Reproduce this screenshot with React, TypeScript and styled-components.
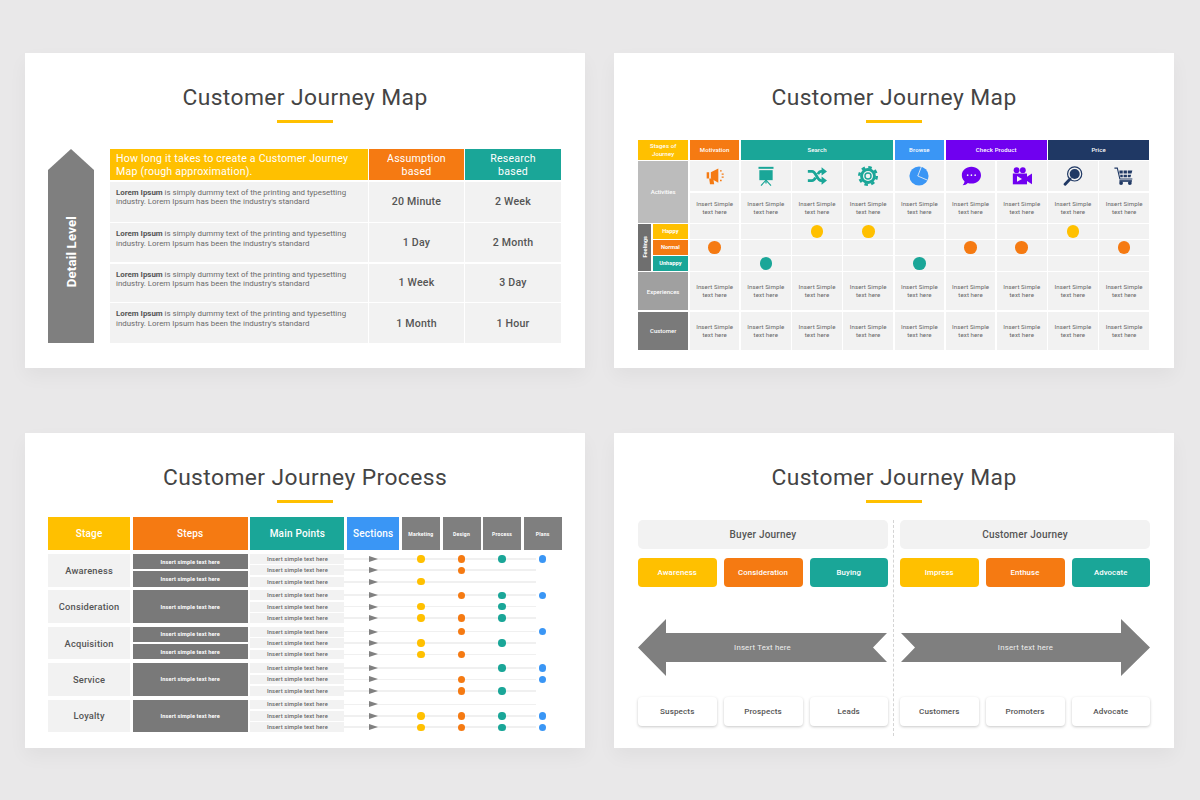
import React from "react";
import styled, { createGlobalStyle } from "styled-components";

const YELLOW = "#ffc000";
const ORANGE = "#f57a12";
const TEAL = "#1aa698";
const BLUE = "#3a96f5";
const PURPLE = "#7000f0";
const NAVY = "#1f3864";
const CELL = "#f2f2f2";
const GREY = "#7f7f7f";

const Global = createGlobalStyle`
  html, body { margin: 0; padding: 0; background: #e9e8e9; }
  body { font-family: Roboto, "Liberation Sans", sans-serif; }
  #root { width: 1200px; height: 800px; overflow: hidden; }
`;

const Page = styled.div`
  width: 1200px;
  height: 800px;
  box-sizing: border-box;
  padding: 53px 26px 0 25px;
  display: grid;
  grid-template-columns: 560px 560px;
  grid-template-rows: 315px 315px;
  column-gap: 29px;
  row-gap: 65px;
  background: #e9e8e9;
`;

const Slide = styled.section`
  background: #fff;
  box-shadow: 0 8px 18px rgba(0, 0, 0, 0.045);
  display: flex;
  flex-direction: column;
  align-items: center;
  box-sizing: border-box;
  padding-top: 30px;
`;

const Title = styled.h2`
  margin: 0;
  font-size: 22.8px;
  line-height: 30px;
  font-weight: 400;
  letter-spacing: 0.42px;
  color: #444;
`;

const Rule = styled.div`
  width: 56px;
  height: 3px;
  margin-top: 7px;
  background: ${YELLOW};
  flex: none;
`;

/* ---------- slide 1 ---------- */
const DetailBody = styled.div`
  margin-top: 26px;
  width: 100%;
  box-sizing: border-box;
  padding: 0 24px 0 23px;
  display: flex;
  gap: 16px;
`;

const UpArrow = styled.div`
  width: 46px;
  height: 194px;
  flex: none;
  background: #7f7f7f;
  clip-path: polygon(50% 0, 100% 21px, 100% 100%, 0 100%, 0 21px);
  display: flex;
  align-items: center;
  justify-content: center;
  padding-top: 12px;
  box-sizing: border-box;
`;

const UpArrowLabel = styled.span`
  writing-mode: vertical-rl;
  transform: rotate(180deg);
  color: #fff;
  font-size: 13.2px;
  font-weight: 700;
  letter-spacing: 0.2px;
`;

const DetailTable = styled.div`
  flex: 1;
  display: grid;
  grid-template-columns: 258px 95px 96px;
  grid-template-rows: 31px 40px 39px 38px 40px;
  gap: 1.5px 1px;
`;

const DetailHead = styled.div<{ $bg: string; $left?: boolean }>`
  background: ${(p) => p.$bg};
  color: #fff;
  font-size: 10.6px;
  line-height: 13px;
  letter-spacing: 0.2px;
  display: flex;
  align-items: center;
  justify-content: ${(p) => (p.$left ? "flex-start" : "center")};
  text-align: ${(p) => (p.$left ? "left" : "center")};
  padding: ${(p) => (p.$left ? "0 4px 0 6px" : "0 16px")};
  box-sizing: border-box;
`;

const LoremCell = styled.div`
  background: ${CELL};
  padding: 6px 6px 0;
  font-size: 7.9px;
  line-height: 9.6px;
  color: #6b6b6b;
  box-sizing: border-box;
  b { font-weight: 700; color: #555; }
`;

const ValueCell = styled.div`
  background: ${CELL};
  display: flex;
  align-items: center;
  justify-content: center;
  color: #555;
  font-size: 10.6px;
  font-weight: 500;
  letter-spacing: 0.2px;
`;

/* ---------- slide 2 ---------- */
const JourneyGrid = styled.div`
  margin: 16.5px 1px 0 0;
  width: 511px;
  display: grid;
  grid-template-columns: 50.3px repeat(9, 49.7px);
  grid-template-rows: 20px 30px 30px 14.5px 14.5px 14.5px 38px 38px;
  gap: 1.5px;
`;

const Band = styled.div<{ $bg: string; $span?: number }>`
  grid-column: span ${(p) => p.$span ?? 1};
  background: ${(p) => p.$bg};
  color: #fff;
  font-size: 6px;
  font-weight: 500;
  line-height: 7.6px;
  letter-spacing: 0.1px;
  display: flex;
  align-items: center;
  justify-content: center;
  text-align: center;
`;

const RowLabel = styled.div<{ $bg: string; $rows?: number }>`
  grid-row: span ${(p) => p.$rows ?? 1};
  background: ${(p) => p.$bg};
  color: #fff;
  font-size: 6px;
  font-weight: 500;
  display: flex;
  align-items: center;
  justify-content: center;
`;

const FeelingsBlock = styled.div`
  grid-row: span 3;
  display: grid;
  grid-template-columns: 13px 1fr;
  grid-template-rows: repeat(3, 14.5px);
  gap: 1.5px;
`;

const FeelingsSide = styled.div`
  grid-row: span 3;
  background: #6f6f6f;
  color: #fff;
  font-size: 5.7px;
  font-weight: 700;
  display: flex;
  align-items: center;
  justify-content: center;
  span { writing-mode: vertical-rl; transform: rotate(180deg); }
`;

const FeelingTag = styled.div<{ $bg: string }>`
  background: ${(p) => p.$bg};
  color: #fff;
  font-size: 5.7px;
  font-weight: 700;
  display: flex;
  align-items: center;
  justify-content: center;
`;

const TextCell = styled.div`
  background: ${CELL};
  color: #666;
  font-size: 6.1px;
  line-height: 7.7px;
  letter-spacing: 0.1px;
  text-align: center;
  display: flex;
  align-items: center;
  justify-content: center;
`;

const IconCell = styled.div`
  background: ${CELL};
  display: flex;
  align-items: center;
  justify-content: center;
  svg { width: 20px; height: 20px; display: block; }
`;

const DotCell = styled.div`
  background: ${CELL};
  display: flex;
  align-items: center;
  justify-content: center;
`;

const BigDot = styled.span<{ $c: string }>`
  width: 12.6px;
  height: 12.6px;
  border-radius: 50%;
  background: ${(p) => p.$c};
`;

/* ---------- slide 3 ---------- */
const ProcessBody = styled.div`
  margin-top: 14px;
  width: 513.5px;
  display: flex;
  flex-direction: column;
`;

const ProcessHeader = styled.div`
  display: grid;
  grid-template-columns: 81.7px 115.3px 94px 52.3px repeat(4, 38px);
  column-gap: 2.6px;
  height: 33px;
  margin-bottom: 4px;
`;

const ProcessHead = styled.div<{ $bg: string; $small?: boolean }>`
  background: ${(p) => p.$bg};
  color: #fff;
  font-size: ${(p) => (p.$small ? "5.1px" : "10px")};
  font-weight: ${(p) => (p.$small ? 700 : 500)};
  letter-spacing: 0.2px;
  display: flex;
  align-items: center;
  justify-content: center;
`;

const ProcessGroups = styled.div`
  display: flex;
  flex-direction: column;
  gap: 3.8px;
`;

const ProcessGroup = styled.div`
  display: grid;
  grid-template-columns: 81.7px 115.3px 1fr;
  column-gap: 2.6px;
  height: 32.6px;
`;

const StageCell = styled.div`
  background: ${CELL};
  color: #555;
  font-size: 9.3px;
  font-weight: 500;
  letter-spacing: 0.2px;
  display: flex;
  align-items: center;
  justify-content: center;
`;

const StepsStack = styled.div`
  display: flex;
  flex-direction: column;
  gap: 2px;
`;

const StepBlock = styled.div`
  flex: 1;
  background: #797979;
  color: #fff;
  font-size: 5.6px;
  font-weight: 700;
  letter-spacing: 0.12px;
  display: flex;
  align-items: center;
  justify-content: center;
`;

const PointRows = styled.div`
  display: grid;
  grid-template-rows: repeat(3, 1fr);
  row-gap: 1.7px;
`;

const PointRow = styled.div`
  position: relative;
  display: grid;
  grid-template-columns: 94px 52.3px repeat(4, 38px);
  column-gap: 2.6px;
  align-items: center;
`;

const PointLine = styled.div`
  position: absolute;
  left: 94px;
  width: 192px;
  top: 50%;
  height: 1.6px;
  margin-top: -0.8px;
  background: #f0f0f0;
`;

const PointText = styled.div`
  height: 100%;
  background: ${CELL};
  color: #666;
  font-size: 5.8px;
  font-weight: 500;
  letter-spacing: 0.13px;
  display: flex;
  align-items: center;
  justify-content: center;
`;

const Marker = styled.div`
  position: relative;
  justify-self: center;
  width: 0;
  height: 0;
  border-left: 9px solid #808080;
  border-top: 3.2px solid transparent;
  border-bottom: 3.2px solid transparent;
`;

const SlotDot = styled.div`
  position: relative;
  display: flex;
  justify-content: center;
`;

const SmallDot = styled.span<{ $c: string }>`
  width: 7.4px;
  height: 7.4px;
  border-radius: 50%;
  background: ${(p) => p.$c};
`;

/* ---------- slide 4 ---------- */
const SplitBody = styled.div`
  margin-top: 17px;
  width: 512px;
  display: grid;
  grid-template-columns: 250px 12px 250px;
`;

const SplitColumn = styled.div`
  display: flex;
  flex-direction: column;
`;

const Divider = styled.div`
  display: flex;
  justify-content: center;
  margin-right: 1px;
  &::before {
    content: "";
    height: 216px;
    border-left: 1px dashed #d4d4d4;
  }
`;

const PhasePill = styled.div`
  height: 29px;
  border-radius: 5px;
  background: ${CELL};
  color: #555;
  font-size: 10px;
  font-weight: 500;
  letter-spacing: 0.2px;
  display: flex;
  align-items: center;
  justify-content: center;
`;

const TripleRow = styled.div<{ $top: number }>`
  display: grid;
  grid-template-columns: 78.5px 79px 78.5px;
  column-gap: 7px;
  margin-top: ${(p) => p.$top}px;
`;

const ColorTile = styled.div<{ $bg: string }>`
  height: 29px;
  border-radius: 4px;
  background: ${(p) => p.$bg};
  color: #fff;
  font-size: 7.8px;
  font-weight: 500;
  letter-spacing: 0.1px;
  display: flex;
  align-items: center;
  justify-content: center;
`;

const BandArrow = styled.div<{ $dir: "left" | "right" }>`
  margin-top: 32px;
  height: 57px;
  width: 249px;
  background: ${GREY};
  color: #eee;
  font-size: 7.8px;
  letter-spacing: 0.2px;
  display: flex;
  align-items: center;
  justify-content: center;
  align-self: ${(p) => (p.$dir === "left" ? "flex-start" : "flex-end")};
  clip-path: ${(p) =>
    p.$dir === "left"
      ? "polygon(0 28.5px, 28px 0, 28px 14px, 100% 14px, calc(100% - 14px) 28.5px, 100% 43px, 28px 43px, 28px 57px)"
      : "polygon(100% 28.5px, calc(100% - 29px) 0, calc(100% - 29px) 14px, 0 14px, 14px 28.5px, 0 43px, calc(100% - 29px) 43px, calc(100% - 29px) 57px)"};
`;

const WhiteCard = styled.div`
  height: 29px;
  border-radius: 4px;
  background: #fff;
  box-shadow: 0 1px 3px rgba(0, 0, 0, 0.22);
  color: #555;
  font-size: 8.1px;
  font-weight: 500;
  letter-spacing: 0.1px;
  display: flex;
  align-items: center;
  justify-content: center;
`;

/* ---------- icons ---------- */
const MegaphoneIcon = () => (
  <svg viewBox="0 0 24 24" fill={ORANGE}>
    <path d="M2 7.5h3v7.5H2z" />
    <path d="M7 7.5l9-4.5v17l-9-5z" />
    <path d="M5 15h5l1 7H6z" />
    <path d="M18 5h2v1.6h-2zM20 9h2.4v1.6H20zM20 12.6h2.4v1.6H20zM18 16.6h2v1.6h-2z" />
  </svg>
);
const BoardIcon = () => (
  <svg viewBox="0 0 24 24" fill={TEAL}>
    <path d="M3 1h18v2.4H3z" />
    <path d="M4 5h16v12H4z" />
    <path d="M11.2 17h1.6v4h-1.6z" />
    <path d="M12 17l-6 6.5M12 17l6 6.5" stroke={TEAL} strokeWidth="1.4" fill="none" />
  </svg>
);
const ShuffleIcon = () => (
  <svg viewBox="0 0 24 24" fill={TEAL}>
    <path d="M1 6.5h5c5 0 6 11 11 11h2M1 17.5h5c2 0 3.2-1.7 4.2-3.6M13 9.8C14 8 15 6.5 17 6.5h2" fill="none" stroke={TEAL} strokeWidth="3.4" />
    <path d="M17.5 1.5L24 6.5l-6.5 5zM17.5 12.5L24 17.5l-6.5 5z" />
  </svg>
);
const GearIcon = () => (
  <svg viewBox="0 0 24 24">
    <circle cx="12" cy="12" r="9.5" fill={TEAL} />
    <circle cx="12" cy="12" r="10.5" fill="none" stroke={TEAL} strokeWidth="3" strokeDasharray="4.2 4.05" />
    <circle cx="12" cy="12" r="6" fill={CELL} />
    <circle cx="12" cy="12" r="4.5" fill={TEAL} />
    <circle cx="12" cy="12" r="2.8" fill={CELL} />
  </svg>
);
const PieIcon = () => (
  <svg viewBox="0 0 24 24">
    <circle cx="12" cy="12" r="11.5" fill={BLUE} />
    <path d="M15 0.5L10.5 12l13 5.5" fill="none" stroke={CELL} strokeWidth="1" />
  </svg>
);
const ChatIcon = () => (
  <svg viewBox="0 0 24 24" fill={PURPLE}>
    <path d="M12.5 1C19 1 24 5.5 24 11s-5 10-11.5 10c-1.6 0-3-.3-4.3-.7C6.5 22 4.5 23 2 23c1.2-1.2 2-2.8 2.2-4.7C2 16.4 1 13.9 1 11 1 5.5 6 1 12.5 1z" />
    <circle cx="8" cy="11" r="1" fill={CELL} />
    <circle cx="12.5" cy="11" r="1" fill={CELL} />
    <circle cx="17" cy="11" r="1" fill={CELL} />
  </svg>
);
const CameraIcon = () => (
  <svg viewBox="0 0 24 24" fill={PURPLE}>
    <circle cx="5.5" cy="5" r="3.5" />
    <circle cx="13" cy="5" r="3.5" />
    <path d="M1 9h17v13H1z" />
    <path d="M18 13l6-4v13l-6-4z" />
    <path d="M6 12l6 3.5L6 19z" fill={CELL} />
  </svg>
);
const SearchIcon = () => (
  <svg viewBox="0 0 24 24" fill={NAVY}>
    <circle cx="14" cy="9.5" r="8.5" fill="none" stroke={NAVY} strokeWidth="1.4" />
    <circle cx="14" cy="9.5" r="6" />
    <path d="M8.5 15.5L2.5 22" stroke={NAVY} strokeWidth="3.4" strokeLinecap="round" />
  </svg>
);
const CartIcon = () => (
  <svg viewBox="0 0 24 24" fill={NAVY}>
    <path d="M0.5 2.5H4L7 15.5h15" fill="none" stroke={NAVY} strokeWidth="1.3" />
    <path d="M6.5 5.5h4V9h-4zM11.5 5.5h4V9h-4zM16.5 5.500h5.5l-1 3.5h-4.5zM7.5 10.5h3v3h-3zM11.5 10.5h4v3h-4zM16.5 10.5h4l-.7 3h-3.3z" />
    <path d="M6.5 17h15v2h-15z" />
    <circle cx="8.5" cy="20.5" r="2.3" />
    <circle cx="19" cy="20.5" r="2.3" />
  </svg>
);

/* ---------- data ---------- */
const detailRows = [
  ["20 Minute", "2 Week"],
  ["1 Day", "2 Month"],
  ["1 Week", "3 Day"],
  ["1 Month", "1 Hour"],
];

const icons = [MegaphoneIcon, BoardIcon, ShuffleIcon, GearIcon, PieIcon, ChatIcon, CameraIcon, SearchIcon, CartIcon];
const nine = Array.from({ length: 9 }, (_, i) => i);

const feelings: { label: string; color: string; cols: number[] }[] = [
  { label: "Happy", color: YELLOW, cols: [2, 3, 7] },
  { label: "Normal", color: ORANGE, cols: [0, 5, 6, 8] },
  { label: "Unhappy", color: TEAL, cols: [1, 4] },
];

const slotColors = [YELLOW, ORANGE, TEAL, BLUE];

const processGroups: { stage: string; steps: number; rows: number[][] }[] = [
  { stage: "Awareness", steps: 2, rows: [[0, 1, 2, 3], [1], [0]] },
  { stage: "Consideration", steps: 1, rows: [[1, 2, 3], [0, 2], [0, 1, 2]] },
  { stage: "Acquisition", steps: 2, rows: [[1, 3], [0, 2], [0, 1]] },
  { stage: "Service", steps: 1, rows: [[2, 3], [1, 3], [1, 2]] },
  { stage: "Loyalty", steps: 1, rows: [[], [0, 1, 2, 3], [0, 1, 2, 3]] },
];

const InsertText = () => (
  <TextCell>
    Insert Simple
    <br />
    text here
  </TextCell>
);

export default function App() {
  return (
    <>
      <Global />
      <Page>
        <Slide>
          <Title>Customer Journey Map</Title>
          <Rule />
          <DetailBody>
            <UpArrow>
              <UpArrowLabel>Detail Level</UpArrowLabel>
            </UpArrow>
            <DetailTable>
              <DetailHead $bg={YELLOW} $left>
                How long it takes to create a Customer Journey Map (rough approximation).
              </DetailHead>
              <DetailHead $bg={ORANGE}>Assumption based</DetailHead>
              <DetailHead $bg={TEAL}>Research based</DetailHead>
              {detailRows.map((r) => (
                <React.Fragment key={r[0]}>
                  <LoremCell>
                    <b>Lorem Ipsum</b> is simply dummy text of the printing and typesetting industry. Lorem Ipsum has
                    been the industry's standard
                  </LoremCell>
                  <ValueCell>{r[0]}</ValueCell>
                  <ValueCell>{r[1]}</ValueCell>
                </React.Fragment>
              ))}
            </DetailTable>
          </DetailBody>
        </Slide>

        <Slide>
          <Title>Customer Journey Map</Title>
          <Rule />
          <JourneyGrid>
            <Band $bg={YELLOW}>
              Stages of
              <br />
              Journey
            </Band>
            <Band $bg={ORANGE}>Motivation</Band>
            <Band $bg={TEAL} $span={3}>Search</Band>
            <Band $bg={BLUE}>Browse</Band>
            <Band $bg={PURPLE} $span={2}>Check Product</Band>
            <Band $bg={NAVY} $span={2}>Price</Band>

            <RowLabel $bg="#bcbcbc" $rows={2}>Activities</RowLabel>
            {icons.map((Icon, i) => (
              <IconCell key={i}>
                <Icon />
              </IconCell>
            ))}
            {nine.map((i) => (
              <InsertText key={i} />
            ))}

            <FeelingsBlock>
              <FeelingsSide>
                <span>Feelings</span>
              </FeelingsSide>
              {feelings.map((f) => (
                <FeelingTag key={f.label} $bg={f.color}>
                  {f.label}
                </FeelingTag>
              ))}
            </FeelingsBlock>
            {feelings.map((f) =>
              nine.map((i) => (
                <DotCell key={f.label + i}>{f.cols.includes(i) && <BigDot $c={f.color} />}</DotCell>
              ))
            )}

            <RowLabel $bg="#a0a0a0">Experiences</RowLabel>
            {nine.map((i) => (
              <InsertText key={i} />
            ))}
            <RowLabel $bg="#7a7a7a">Customer</RowLabel>
            {nine.map((i) => (
              <InsertText key={i} />
            ))}
          </JourneyGrid>
        </Slide>

        <Slide>
          <Title>Customer Journey Process</Title>
          <Rule />
          <ProcessBody>
            <ProcessHeader>
              <ProcessHead $bg={YELLOW}>Stage</ProcessHead>
              <ProcessHead $bg={ORANGE}>Steps</ProcessHead>
              <ProcessHead $bg={TEAL}>Main Points</ProcessHead>
              <ProcessHead $bg={BLUE}>Sections</ProcessHead>
              <ProcessHead $bg={GREY} $small>Marketing</ProcessHead>
              <ProcessHead $bg={GREY} $small>Design</ProcessHead>
              <ProcessHead $bg={GREY} $small>Process</ProcessHead>
              <ProcessHead $bg={GREY} $small>Plans</ProcessHead>
            </ProcessHeader>
            <ProcessGroups>
              {processGroups.map((g) => (
                <ProcessGroup key={g.stage}>
                  <StageCell>{g.stage}</StageCell>
                  <StepsStack>
                    {Array.from({ length: g.steps }, (_, i) => (
                      <StepBlock key={i}>Insert simple text here</StepBlock>
                    ))}
                  </StepsStack>
                  <PointRows>
                    {g.rows.map((row, i) => (
                      <PointRow key={i}>
                        <PointLine />
                        <PointText>Insert simple text here</PointText>
                        <Marker />
                        {slotColors.map((c, s) => (
                          <SlotDot key={s}>{row.includes(s) && <SmallDot $c={c} />}</SlotDot>
                        ))}
                      </PointRow>
                    ))}
                  </PointRows>
                </ProcessGroup>
              ))}
            </ProcessGroups>
          </ProcessBody>
        </Slide>

        <Slide>
          <Title>Customer Journey Map</Title>
          <Rule />
          <SplitBody>
            <SplitColumn>
              <PhasePill>Buyer Journey</PhasePill>
              <TripleRow $top={9}>
                <ColorTile $bg={YELLOW}>Awareness</ColorTile>
                <ColorTile $bg={ORANGE}>Consideration</ColorTile>
                <ColorTile $bg={TEAL}>Buying</ColorTile>
              </TripleRow>
              <BandArrow $dir="left">Insert Text here</BandArrow>
              <TripleRow $top={20.5}>
                <WhiteCard>Suspects</WhiteCard>
                <WhiteCard>Prospects</WhiteCard>
                <WhiteCard>Leads</WhiteCard>
              </TripleRow>
            </SplitColumn>
            <Divider />
            <SplitColumn>
              <PhasePill>Customer Journey</PhasePill>
              <TripleRow $top={9}>
                <ColorTile $bg={YELLOW}>Impress</ColorTile>
                <ColorTile $bg={ORANGE}>Enthuse</ColorTile>
                <ColorTile $bg={TEAL}>Advocate</ColorTile>
              </TripleRow>
              <BandArrow $dir="right">Insert text here</BandArrow>
              <TripleRow $top={20.5}>
                <WhiteCard>Customers</WhiteCard>
                <WhiteCard>Promoters</WhiteCard>
                <WhiteCard>Advocate</WhiteCard>
              </TripleRow>
            </SplitColumn>
          </SplitBody>
        </Slide>
      </Page>
    </>
  );
}
